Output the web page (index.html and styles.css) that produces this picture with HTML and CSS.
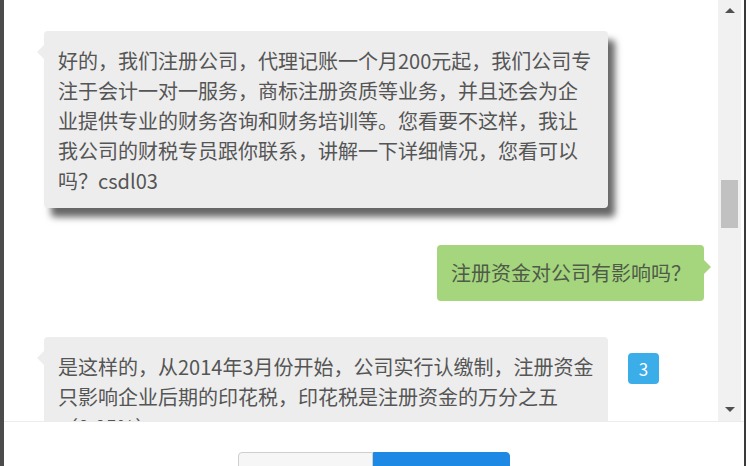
FILE: index.html
```html
<!DOCTYPE html>
<html lang="zh-CN">
<head>
<meta charset="utf-8">
<title>在线咨询</title>
<link rel="stylesheet" href="styles.css">
</head>
<body>
<div class="frame">
  <div class="edge-left"></div>
  <div class="main">
    <div class="chat">
      <div class="messages">
        <div class="row row-left">
          <div class="bubble bubble-in bubble-raised">好的，我们注册公司，代理记账一个月200元起，我们公司专注于会计一对一服务，商标注册资质等业务，并且还会为企业提供专业的财务咨询和财务培训等。您看要不这样，我让我公司的财税专员跟你联系，讲解一下详细情况，您看可以吗？csdl03</div>
        </div>
        <div class="row row-right">
          <div class="bubble bubble-out">注册资金对公司有影响吗？</div>
        </div>
        <div class="row row-left">
          <div class="bubble bubble-in">是这样的，从2014年3月份开始，公司实行认缴制，注册资金只影响企业后期的印花税，印花税是注册资金的万分之五（0.05%）。</div>
          <span class="badge">3</span>
        </div>
      </div>
      <div class="scrollbar">
        <span class="arrow arrow-up"></span>
        <div class="track"><div class="thumb"></div></div>
        <span class="arrow arrow-down"></span>
      </div>
    </div>
    <div class="footer">
      <button class="btn btn-cancel">取消</button>
      <button class="btn btn-ok">确定</button>
    </div>
  </div>
  <div class="edge-right"></div>
</div>
</body>
</html>
```
FILE: styles.css
```css
html, body {
  margin: 0;
  padding: 0;
  height: 466px;
  overflow: hidden;
  background: #ffffff;
  font-family: "Noto Sans CJK SC", "Noto Sans", sans-serif;
}

.frame {
  display: flex;
  height: 466px;
}

.edge-left {
  width: 4px;
  flex: none;
  background: #4b4b4b;
}

.edge-right {
  width: 2px;
  flex: none;
  background: #3a3a3a;
}

.main {
  flex: 1;
  display: flex;
  flex-direction: column;
  min-width: 0;
}

.chat {
  height: 422px;
  flex: none;
  display: flex;
  overflow: hidden;
  border-bottom: 1px solid #ececec;
  box-sizing: border-box;
}

.messages {
  flex: 1;
  padding: 31px 14px 0 40px;
  display: flex;
  flex-direction: column;
  gap: 37px;
  min-width: 0;
}

.row {
  display: flex;
  align-items: flex-start;
}

.row-right {
  justify-content: flex-end;
  margin-bottom: -1px;
}

.bubble {
  position: relative;
  font-size: 20px;
  line-height: 30px;
  border-radius: 4px;
}

.bubble-in {
  width: 537px;
  padding: 15px 13px 12px 14px;
  background: #ededed;
  color: #555555;
}

.bubble-in::before {
  content: "";
  position: absolute;
  left: -7px;
  top: 14px;
  border-style: solid;
  border-width: 7px 7px 7px 0;
  border-color: transparent #ededed transparent transparent;
}

.bubble-raised {
  box-shadow: 7px 9px 7px rgba(0, 0, 0, 0.6);
}

.bubble-out {
  padding: 13px 13px 13px 14px;
  background: #a5d67d;
  color: #4f5a48;
  white-space: nowrap;
}

.bubble-out::after {
  content: "";
  position: absolute;
  right: -7px;
  top: 15px;
  border-style: solid;
  border-width: 7px 0 7px 7px;
  border-color: transparent transparent transparent #a5d67d;
}

.badge {
  margin: 16px 0 0 20px;
  width: 31px;
  height: 31px;
  border-radius: 4px;
  background: #3baeea;
  color: #ffffff;
  font-size: 17px;
  line-height: 31px;
  text-align: center;
  flex: none;
}

.scrollbar {
  width: 23px;
  flex: none;
  margin-right: 3px;
  background: #f1f1f1;
  display: flex;
  flex-direction: column;
  align-items: center;
}

.arrow {
  width: 0;
  height: 0;
  border-style: solid;
  flex: none;
}

.arrow-up {
  margin-top: 8px;
  border-width: 0 5px 5px 5px;
  border-color: transparent transparent #505050 transparent;
}

.arrow-down {
  margin-bottom: 9px;
  border-width: 5px 5px 0 5px;
  border-color: #505050 transparent transparent transparent;
}

.track {
  flex: 1;
  align-self: stretch;
  padding: 167px 3px 0 3px;
}

.thumb {
  height: 48px;
  background: #c1c1c1;
}

.footer {
  flex: 1;
  display: flex;
  justify-content: center;
  align-items: flex-start;
  padding-top: 30px;
}

.btn {
  font-family: "Noto Sans CJK SC", "Noto Sans", sans-serif;
  font-size: 16px;
  height: 38px;
  width: 136px;
  padding: 8px 0 0;
  line-height: 20px;
  cursor: pointer;
}

.btn-cancel {
  background: #f6f6f6;
  color: #333333;
  border: 1px solid #cfcfcf;
  border-radius: 4px 0 0 4px;
  width: 135px;
}

.btn-ok {
  background: #1e88e5;
  color: #ffffff;
  border: 1px solid #1e88e5;
  border-radius: 0 4px 4px 0;
  width: 137px;
}
```
